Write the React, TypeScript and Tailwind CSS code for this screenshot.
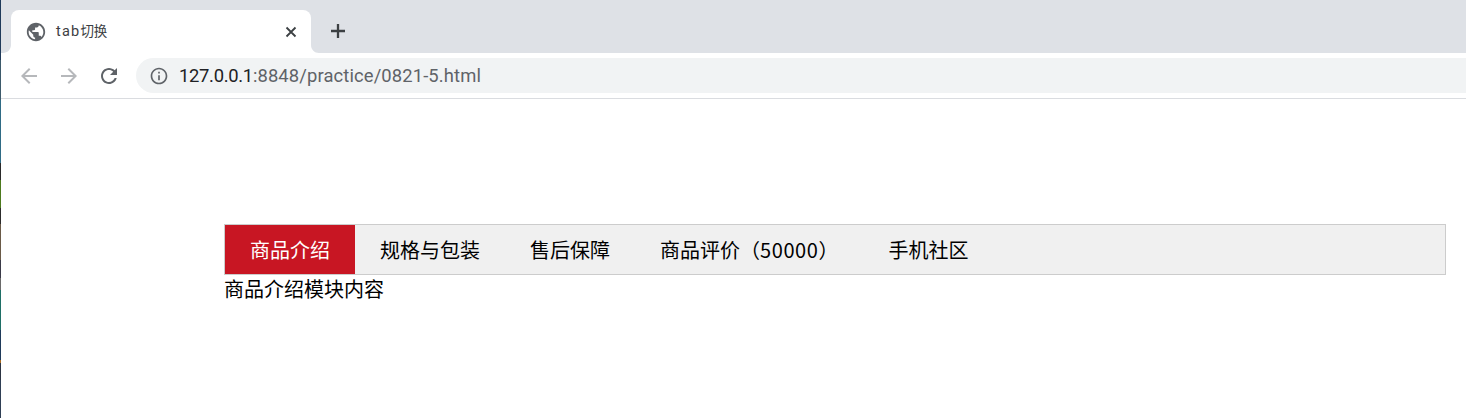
const edgeColors = [
  'h-[60px] bg-[#1f3a5a]',
  'h-[40px] bg-[#3d5a6b]',
  'h-[63px] bg-[#2f6b85]',
  'h-[17px] bg-[#2a2a2a]',
  'h-[28px] bg-[#4d7a1e]',
  'h-[16px] bg-[#2c2c2c]',
  'h-[36px] bg-[#6a5a48]',
  'h-[18px] bg-[#3a3a48]',
  'h-[12px] bg-[#6a6a6a]',
  'h-[40px] bg-[#1f6f66]',
  'h-[30px] bg-[#1f3a5a]',
  'h-[3px] bg-[#a86a20]',
  'h-[17px] bg-[#2c3442]',
  'h-[38px] bg-[#2f3f55]',
];

function MdIcon({ d, className }: { d: string; className: string }) {
  return (
    <svg viewBox="0 0 24 24" fill="currentColor" className={className}>
      <path d={d} />
    </svg>
  );
}

function BrowserChrome() {
  return (
    <div className="font-['Roboto','Noto_Sans_CJK_SC',sans-serif]">
      {/* Tab strip */}
      <div className="flex h-[53px] items-end bg-[#dee1e6] pl-[10px]">
        <div className="relative flex h-[43px] w-[300px] items-center rounded-t-[8px] bg-white pl-[16px] pr-[14px]">
          <svg viewBox="0 0 8 8" className="absolute bottom-0 left-[-8px] h-[8px] w-[8px] text-white" fill="currentColor">
            <path d="M8 0v8H0c4.4 0 8-3.6 8-8z" />
          </svg>
          <svg viewBox="0 0 8 8" className="absolute bottom-0 right-[-8px] h-[8px] w-[8px] text-white" fill="currentColor">
            <path d="M0 0v8h8C3.6 8 0 4.6 0 0z" />
          </svg>
          <MdIcon
            className="ml-[-2px] mr-[9px] h-[22px] w-[22px] shrink-0 text-[#5f6368]"
            d="M12 2C6.48 2 2 6.48 2 12s4.48 10 10 10 10-4.48 10-10S17.52 2 12 2zm-1 17.93c-3.95-.49-7-3.85-7-7.93 0-.62.08-1.21.21-1.79L9 15v1c0 1.1.9 2 2 2v1.93zm6.9-2.54c-.26-.81-1-1.39-1.9-1.39h-1v-3c0-.55-.45-1-1-1H8v-2h2c.55 0 1-.45 1-1V7h2c1.1 0 2-.9 2-2v-.41c2.93 1.19 5 4.06 5 7.41 0 2.08-.8 3.97-2.1 5.39z"
          />
          <span className="flex-1 text-[13.5px] text-[#3c4043]">
            <span className="text-[14.5px] tracking-[1.2px]">tab</span>切换
          </span>
          <svg viewBox="0 0 12 12" className="h-[12px] w-[12px] text-[#3c4043]" stroke="currentColor" strokeWidth="1.8" fill="none">
            <path d="M1.5 1.5l9 9M10.5 1.5l-9 9" />
          </svg>
        </div>
        <svg viewBox="0 0 16 16" className="mb-[14px] ml-[19px] h-[16px] w-[16px] text-[#3c4043]" stroke="currentColor" strokeWidth="2.3" fill="none">
          <path d="M8 1v14M1 8h14" />
        </svg>
      </div>

      {/* Toolbar */}
      <div className="flex h-[46px] items-start border-b border-[#dadce0] bg-white pt-[5px]">
        <div className="flex h-[35px] w-[135px] items-center pl-[16px] text-[#b6b8bb]">
          <MdIcon className="h-[24px] w-[24px]" d="M20 11H7.83l5.59-5.59L12 4l-8 8 8 8 1.41-1.41L7.83 13H20v-2z" />
          <MdIcon className="ml-[16px] h-[24px] w-[24px] rotate-180" d="M20 11H7.83l5.59-5.59L12 4l-8 8 8 8 1.41-1.41L7.83 13H20v-2z" />
          <MdIcon
            className="ml-[16px] h-[24px] w-[24px] text-[#5f6368]"
            d="M17.65 6.35C16.2 4.9 14.21 4 12 4c-4.42 0-7.99 3.58-7.99 8s3.57 8 7.99 8c3.73 0 6.84-2.55 7.73-6h-2.08c-.82 2.33-3.04 4-5.65 4-3.31 0-6-2.69-6-6s2.69-6 6-6c1.66 0 3.14.69 4.22 1.78L13 11h7V4l-2.35 2.35z"
          />
        </div>
        <div className="flex h-[35px] flex-1 items-center rounded-l-[18px] bg-[#f1f3f4] pl-[13px]">
          <MdIcon
            className="h-[20px] w-[20px] text-[#5f6368]"
            d="M11 7h2v2h-2zm0 4h2v6h-2zm1-9C6.48 2 2 6.48 2 12s4.48 10 10 10 10-4.48 10-10S17.52 2 12 2zm0 18c-4.41 0-8-3.59-8-8s3.59-8 8-8 8 3.59 8 8-3.59 8-8 8z"
          />
          <span className="ml-[10px] text-[18.4px] tracking-[0.12px] text-[#5f6368]">
            <span className="tracking-[-0.3px] text-[#202124]">127.0.0.1</span>:8848/practice/0821-5.html
          </span>
        </div>
      </div>
    </div>
  );
}

export default function App() {
  const tabClass = 'flex items-center px-[25px] leading-none';
  return (
    <div className="flex h-[418px] w-full overflow-hidden bg-white">
      <div className="flex w-px shrink-0 flex-col">
        {edgeColors.map((c) => (
          <div key={c} className={c} />
        ))}
      </div>
      <div className="min-w-0 flex-1">
        <BrowserChrome />
        <div className="pl-[223px] pr-[20px] pt-[125px] font-['Noto_Sans_CJK_SC',sans-serif] text-[20px] text-black">
          <ul className="flex h-[51px] border border-[#cccccc] bg-[#f0f0f0]">
            <li className={`${tabClass} bg-[#c81623] text-white`}>商品介绍</li>
            <li className={tabClass}>规格与包装</li>
            <li className={tabClass}>售后保障</li>
            <li className={tabClass}>
              商品评价（<span className="tracking-[0.6px]">50000</span>）
            </li>
            <li className={tabClass}>手机社区</li>
          </ul>
          <div className="mt-[-1px] text-[20px] leading-[30px]">商品介绍模块内容</div>
        </div>
      </div>
    </div>
  );
}
